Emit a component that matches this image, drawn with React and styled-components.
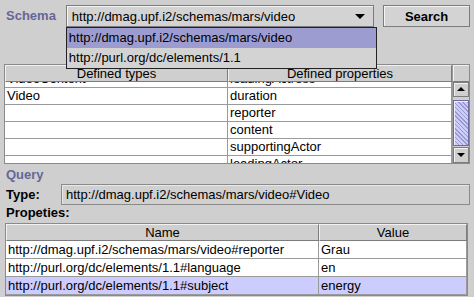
import styled, { createGlobalStyle } from 'styled-components'

const GlobalStyle = createGlobalStyle`
  body {
    margin: 0;
    background: #cfcfcf;
    font-family: 'Liberation Sans', Arial, sans-serif;
  }
`

const Panel = styled.div`
  width: 474px;
  height: 297px;
  box-sizing: border-box;
  padding: 5px 4px 0 4px;
  background: #cfcfcf;
  font-size: 13px;
  color: #000;
  display: flex;
  flex-direction: column;
`

const TopRow = styled.div`
  display: flex;
  align-items: center;
  height: 22px;
  position: relative;
  z-index: 2;
`

const TitleLabel = styled.div`
  font-weight: bold;
  color: #666699;
  width: ${(p) => p.$width || 'auto'};
  padding-left: ${(p) => p.$indent || 0}px;
  line-height: ${(p) => p.$height || 14}px;
  margin-top: ${(p) => p.$top || 0}px;
`

const BoldLabel = styled.div`
  font-weight: bold;
  width: ${(p) => p.$width || 'auto'};
  padding-left: 2px;
  line-height: ${(p) => p.$height || 16}px;
`

const Combo = styled.div`
  position: relative;
  width: 309px;
  height: 22px;
  box-sizing: border-box;
  border: 1px solid #7c7c7c;
  box-shadow: inset 1px 1px #f4f4f4;
  background: #d3d3d3;
  display: flex;
  align-items: center;
  padding-left: 5px;
`

const ComboText = styled.span`
  flex: 1;
  white-space: nowrap;
`

const Arrow = styled.span`
  width: 0;
  height: 0;
  border-left: 5px solid transparent;
  border-right: 5px solid transparent;
  border-top: 5px solid #000;
  margin-right: 8px;
`

const Popup = styled.div`
  position: absolute;
  top: 21px;
  left: -1px;
  width: 311px;
  box-sizing: border-box;
  border: 1px solid #222;
  background: #d3d3d3;
`

const PopupItem = styled.div`
  height: 20px;
  line-height: 20px;
  padding-left: 2px;
  white-space: nowrap;
  background: ${(p) => (p.$active ? '#9c9cd0' : '#d3d3d3')};
`

const Button = styled.div`
  margin-left: 9px;
  width: 87px;
  height: 22px;
  box-sizing: border-box;
  border: 1px solid #7c7c7c;
  box-shadow: inset 1px 1px #f4f4f4;
  background: #d3d3d3;
  font-weight: bold;
  display: flex;
  align-items: center;
  justify-content: center;
`

const Table = styled.div`
  margin: ${(p) => p.$margin};
  border: 1px solid #8a8a8a;
  background: #fff;
  display: flex;
  flex-direction: column;
  overflow: hidden;
`

const TableMain = styled.div`
  display: flex;
  height: ${(p) => p.$height}px;
`

const TableBody = styled.div`
  flex: 1;
  display: flex;
  flex-direction: column;
  min-width: 0;
`

const HeaderRow = styled.div`
  display: grid;
  grid-template-columns: ${(p) => p.$cols};
  height: 17px;
  flex-shrink: 0;
`

const HeaderCell = styled.div`
  background: #cfcfcf;
  border-top: 1px solid #f2f2f2;
  border-left: 1px solid #f2f2f2;
  border-right: 1px solid #7c7c7c;
  border-bottom: 1px solid #7c7c7c;
  box-sizing: border-box;
  text-align: center;
  line-height: 15px;
  white-space: nowrap;
  overflow: hidden;
`

const Viewport = styled.div`
  flex: 1;
  overflow: hidden;
`

const Rows = styled.div`
  margin-top: ${(p) => p.$offset || 0}px;
`

const Row = styled.div`
  display: grid;
  grid-template-columns: ${(p) => p.$cols};
  height: ${(p) => p.$h}px;
  background: ${(p) => (p.$selected ? '#ccccff' : '#fff')};
`

const Cell = styled.div`
  border-right: 1px solid #9a9a9a;
  border-bottom: 1px solid #9a9a9a;
  box-sizing: border-box;
  padding-left: 2px;
  line-height: ${(p) => p.$h - 1}px;
  white-space: nowrap;
  overflow: hidden;
`

const ScrollBar = styled.div`
  width: 17px;
  display: flex;
  flex-direction: column;
  background: #cfcfcf;
  border-left: 1px solid #9a9a9a;
  box-sizing: border-box;
`

const Corner = styled.div`
  height: 17px;
  box-sizing: border-box;
  border-bottom: 1px solid #7c7c7c;
  box-shadow: inset 1px 1px #f2f2f2;
`

const ScrollBtn = styled.div`
  height: 16px;
  box-sizing: border-box;
  border: 1px solid #7c7c7c;
  box-shadow: inset 1px 1px #f2f2f2;
  display: flex;
  align-items: center;
  justify-content: center;
  &::after {
    content: '';
    border-left: 4px solid transparent;
    border-right: 4px solid transparent;
    ${(p) => (p.$up ? 'border-bottom: 4px solid #000;' : 'border-top: 4px solid #000;')}
  }
`

const Track = styled.div`
  flex: 1;
  padding: 3px 0 1px 0;
  display: flex;
  flex-direction: column;
`

const Thumb = styled.div`
  height: 44px;
  border: 1px solid #6b6b9c;
  box-shadow: inset 1px 1px #eeeeff;
  background: repeating-linear-gradient(45deg, #9999cc 0 1px, #ccccff 1px 3px);
`

const TypeRow = styled.div`
  display: flex;
  align-items: center;
  margin-top: 2px;
  height: 21px;
`

const Field = styled.div`
  flex: 1;
  height: 21px;
  box-sizing: border-box;
  border: 1px solid #8a8a8a;
  box-shadow: inset 1px 1px #e8e8e8;
  background: #d0d0d0;
  padding-left: 4px;
  line-height: 19px;
  white-space: nowrap;
`

const schemas = ['http://dmag.upf.i2/schemas/mars/video', 'http://purl.org/dc/elements/1.1']

const typeRows = [
  ['VideoContent', 'leadingActress'],
  ['Video', 'duration'],
  ['', 'reporter'],
  ['', 'content'],
  ['', 'supportingActor'],
  ['', 'leadingActor'],
]

const props = [
  ['http://dmag.upf.i2/schemas/mars/video#reporter', 'Grau'],
  ['http://purl.org/dc/elements/1.1#language', 'en'],
  ['http://purl.org/dc/elements/1.1#subject', 'energy', true],
]

const typeCols = '223px 1fr'
const propCols = '313px 1fr'

export default function App() {
  return (
    <Panel>
      <GlobalStyle />
      <TopRow>
        <TitleLabel $width="60px" $indent={2} $height={22}>Schema</TitleLabel>
        <Combo>
          <ComboText>{schemas[0]}</ComboText>
          <Arrow />
          <Popup>
            {schemas.map((s, i) => (
              <PopupItem key={s} $active={i === 0}>{s}</PopupItem>
            ))}
          </Popup>
        </Combo>
        <Button>Search</Button>
      </TopRow>

      <Table $margin="37px 0 0 0">
        <TableMain $height={98}>
          <TableBody>
            <HeaderRow $cols={typeCols}>
              <HeaderCell>Defined types</HeaderCell>
              <HeaderCell>Defined properties</HeaderCell>
            </HeaderRow>
            <Viewport>
              <Rows $offset={-11}>
                {typeRows.map(([t, p], i) => (
                  <Row key={i} $cols={typeCols} $h={17}>
                    <Cell $h={17}>{t}</Cell>
                    <Cell $h={17}>{p}</Cell>
                  </Row>
                ))}
              </Rows>
            </Viewport>
          </TableBody>
          <ScrollBar>
            <Corner />
            <ScrollBtn $up />
            <Track>
              <Thumb />
            </Track>
            <ScrollBtn />
          </ScrollBar>
        </TableMain>
      </Table>

      <TitleLabel $indent={2} $height={14} $top={4}>Query</TitleLabel>
      <TypeRow>
        <BoldLabel $width="55px" $height={21}>Type:</BoldLabel>
        <Field>http://dmag.upf.i2/schemas/mars/video#Video</Field>
      </TypeRow>
      <BoldLabel $height={16}>Propeties:</BoldLabel>

      <Table $margin="2px 2px 0 1px">
        <HeaderRow $cols={propCols}>
          <HeaderCell>Name</HeaderCell>
          <HeaderCell>Value</HeaderCell>
        </HeaderRow>
        {props.map(([n, v, sel], i) => (
          <Row key={i} $cols={propCols} $h={18} $selected={sel}>
            <Cell $h={18}>{n}</Cell>
            <Cell $h={18}>{v}</Cell>
          </Row>
        ))}
      </Table>
    </Panel>
  )
}
